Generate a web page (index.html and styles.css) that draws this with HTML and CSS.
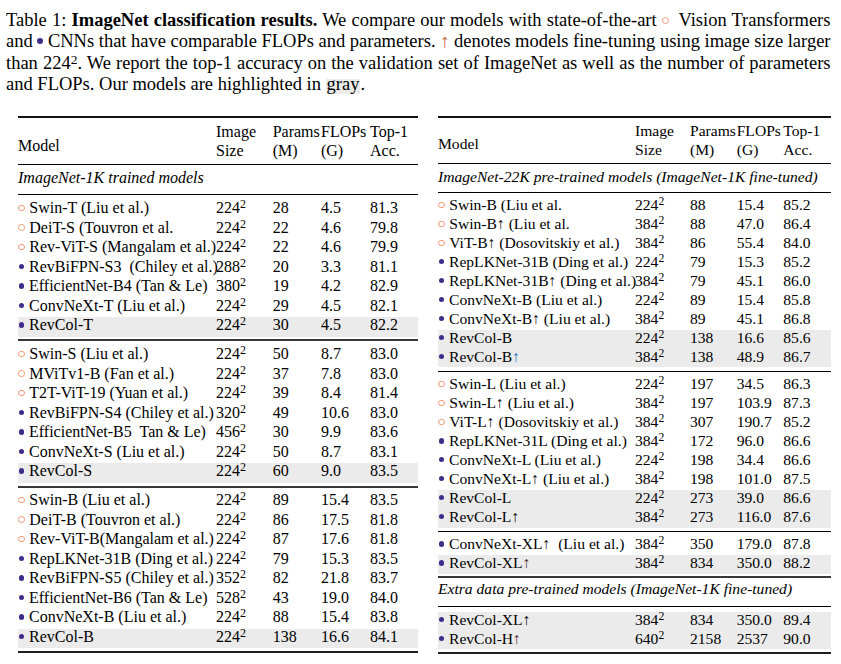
FILE: index.html
```html
<!DOCTYPE html>
<html lang="en">
<head>
<meta charset="utf-8">
<title>Table 1: ImageNet classification results</title>
<link rel="stylesheet" href="styles.css">
</head>
<body>
<div class="page">
  <div class="caption">
    <span class="ln">Table 1: <b>ImageNet classification results.</b> We compare our models with state-of-the-art <span class="mk vit"></span> Vision Transformers</span>
    <span class="ln">and <span class="mk cnn"></span> CNNs that have comparable FLOPs and parameters. <span class="up orange">↑</span> denotes models fine-tuning using image size larger</span>
    <span class="ln">than 224<sup>2</sup>. We report the top-1 accuracy on the validation set of ImageNet as well as the number of parameters</span>
    <span class="ln last">and FLOPs. Our models are highlighted in <span class="hl">gray</span>.</span>
  </div>

  <div class="tables">
    <section class="tbl tbl-left">
      <div class="rule top"></div>
      <div class="grid head"><div class="model">Model</div><div>Image<br>Size</div><div>Params<br>(M)</div><div>FLOPs<br>(G)</div><div>Top-1<br>Acc.</div></div>
      <div class="rule mid"></div>
      <div class="sect">ImageNet-1K trained models</div>
      <div class="rule"></div>

      <div class="grid row"><div><span class="mk vit"></span>Swin-T (Liu et al.)</div><div>224<sup>2</sup></div><div>28</div><div>4.5</div><div>81.3</div></div>
      <div class="grid row"><div><span class="mk vit"></span>DeiT-S (Touvron et al.</div><div>224<sup>2</sup></div><div>22</div><div>4.6</div><div>79.8</div></div>
      <div class="grid row"><div><span class="mk vit"></span>Rev-ViT-S (Mangalam et al.)</div><div>224<sup>2</sup></div><div>22</div><div>4.6</div><div>79.9</div></div>
      <div class="grid row"><div><span class="mk cnn"></span>RevBiFPN-S3&nbsp; (Chiley et al.)</div><div>288<sup>2</sup></div><div>20</div><div>3.3</div><div>81.1</div></div>
      <div class="grid row"><div><span class="mk cnn"></span>EfficientNet-B4 (Tan &amp; Le)</div><div>380<sup>2</sup></div><div>19</div><div>4.2</div><div>82.9</div></div>
      <div class="grid row"><div><span class="mk cnn"></span>ConvNeXt-T (Liu et al.)</div><div>224<sup>2</sup></div><div>29</div><div>4.5</div><div>82.1</div></div>
      <div class="grid row ours"><div><span class="mk cnn"></span>RevCol-T</div><div>224<sup>2</sup></div><div>30</div><div>4.5</div><div>82.2</div></div>
      <div class="rule thick"></div>

      <div class="grid row"><div><span class="mk vit"></span>Swin-S (Liu et al.)</div><div>224<sup>2</sup></div><div>50</div><div>8.7</div><div>83.0</div></div>
      <div class="grid row"><div><span class="mk vit"></span>MViTv1-B (Fan et al.)</div><div>224<sup>2</sup></div><div>37</div><div>7.8</div><div>83.0</div></div>
      <div class="grid row"><div><span class="mk vit"></span>T2T-ViT-19 (Yuan et al.)</div><div>224<sup>2</sup></div><div>39</div><div>8.4</div><div>81.4</div></div>
      <div class="grid row"><div><span class="mk cnn"></span>RevBiFPN-S4 (Chiley et al.)</div><div>320<sup>2</sup></div><div>49</div><div>10.6</div><div>83.0</div></div>
      <div class="grid row"><div><span class="mk cnn"></span>EfficientNet-B5&nbsp; Tan &amp; Le)</div><div>456<sup>2</sup></div><div>30</div><div>9.9</div><div>83.6</div></div>
      <div class="grid row"><div><span class="mk cnn"></span>ConvNeXt-S (Liu et al.)</div><div>224<sup>2</sup></div><div>50</div><div>8.7</div><div>83.1</div></div>
      <div class="grid row ours"><div><span class="mk cnn"></span>RevCol-S</div><div>224<sup>2</sup></div><div>60</div><div>9.0</div><div>83.5</div></div>
      <div class="rule thick"></div>

      <div class="grid row"><div><span class="mk vit"></span>Swin-B (Liu et al.)</div><div>224<sup>2</sup></div><div>89</div><div>15.4</div><div>83.5</div></div>
      <div class="grid row"><div><span class="mk vit"></span>DeiT-B (Touvron et al.)</div><div>224<sup>2</sup></div><div>86</div><div>17.5</div><div>81.8</div></div>
      <div class="grid row"><div><span class="mk vit"></span>Rev-ViT-B(Mangalam et al.)</div><div>224<sup>2</sup></div><div>87</div><div>17.6</div><div>81.8</div></div>
      <div class="grid row"><div><span class="mk cnn"></span>RepLKNet-31B (Ding et al.)</div><div>224<sup>2</sup></div><div>79</div><div>15.3</div><div>83.5</div></div>
      <div class="grid row"><div><span class="mk cnn"></span>RevBiFPN-S5 (Chiley et al.)</div><div>352<sup>2</sup></div><div>82</div><div>21.8</div><div>83.7</div></div>
      <div class="grid row"><div><span class="mk cnn"></span>EfficientNet-B6 (Tan &amp; Le)</div><div>528<sup>2</sup></div><div>43</div><div>19.0</div><div>84.0</div></div>
      <div class="grid row"><div><span class="mk cnn"></span>ConvNeXt-B (Liu et al.)</div><div>224<sup>2</sup></div><div>88</div><div>15.4</div><div>83.8</div></div>
      <div class="grid row ours"><div><span class="mk cnn"></span>RevCol-B</div><div>224<sup>2</sup></div><div>138</div><div>16.6</div><div>84.1</div></div>
      <div class="rule bottom"></div>
    </section>

    <section class="tbl tbl-right">
      <div class="rule top"></div>
      <div class="grid head"><div class="model">Model</div><div>Image<br>Size</div><div>Params<br>(M)</div><div>FLOPs<br>(G)</div><div>Top-1<br>Acc.</div></div>
      <div class="rule mid"></div>
      <div class="sect">ImageNet-22K pre-trained models (ImageNet-1K fine-tuned)</div>
      <div class="rule"></div>

      <div class="grid row"><div><span class="mk vit"></span>Swin-B (Liu et al.</div><div>224<sup>2</sup></div><div>88</div><div>15.4</div><div>85.2</div></div>
      <div class="grid row"><div><span class="mk vit"></span>Swin-B<span class="up">↑</span> (Liu et al.</div><div>384<sup>2</sup></div><div>88</div><div>47.0</div><div>86.4</div></div>
      <div class="grid row"><div><span class="mk vit"></span>ViT-B<span class="up">↑</span> (Dosovitskiy et al.)</div><div>384<sup>2</sup></div><div>86</div><div>55.4</div><div>84.0</div></div>
      <div class="grid row"><div><span class="mk cnn"></span>RepLKNet-31B (Ding et al.)</div><div>224<sup>2</sup></div><div>79</div><div>15.3</div><div>85.2</div></div>
      <div class="grid row"><div><span class="mk cnn"></span>RepLKNet-31B<span class="up">↑</span> (Ding et al.)</div><div>384<sup>2</sup></div><div>79</div><div>45.1</div><div>86.0</div></div>
      <div class="grid row"><div><span class="mk cnn"></span>ConvNeXt-B (Liu et al.)</div><div>224<sup>2</sup></div><div>89</div><div>15.4</div><div>85.8</div></div>
      <div class="grid row"><div><span class="mk cnn"></span>ConvNeXt-B<span class="up">↑</span> (Liu et al.)</div><div>384<sup>2</sup></div><div>89</div><div>45.1</div><div>86.8</div></div>
      <div class="grid row ours"><div><span class="mk cnn"></span>RevCol-B</div><div>224<sup>2</sup></div><div>138</div><div>16.6</div><div>85.6</div></div>
      <div class="grid row ours"><div><span class="mk cnn"></span>RevCol-B<span class="up blue">↑</span></div><div>384<sup>2</sup></div><div>138</div><div>48.9</div><div>86.7</div></div>
      <div class="rule"></div>

      <div class="grid row"><div><span class="mk vit"></span>Swin-L (Liu et al.)</div><div>224<sup>2</sup></div><div>197</div><div>34.5</div><div>86.3</div></div>
      <div class="grid row"><div><span class="mk vit"></span>Swin-L<span class="up">↑</span> (Liu et al.)</div><div>384<sup>2</sup></div><div>197</div><div>103.9</div><div>87.3</div></div>
      <div class="grid row"><div><span class="mk vit"></span>ViT-L<span class="up">↑</span> (Dosovitskiy et al.)</div><div>384<sup>2</sup></div><div>307</div><div>190.7</div><div>85.2</div></div>
      <div class="grid row"><div><span class="mk cnn"></span>RepLKNet-31L (Ding et al.)</div><div>384<sup>2</sup></div><div>172</div><div>96.0</div><div>86.6</div></div>
      <div class="grid row"><div><span class="mk cnn"></span>ConvNeXt-L (Liu et al.)</div><div>224<sup>2</sup></div><div>198</div><div>34.4</div><div>86.6</div></div>
      <div class="grid row"><div><span class="mk cnn"></span>ConvNeXt-L<span class="up">↑</span> (Liu et al.)</div><div>384<sup>2</sup></div><div>198</div><div>101.0</div><div>87.5</div></div>
      <div class="grid row ours"><div><span class="mk cnn"></span>RevCol-L</div><div>224<sup>2</sup></div><div>273</div><div>39.0</div><div>86.6</div></div>
      <div class="grid row ours"><div><span class="mk cnn"></span>RevCol-L<span class="up">↑</span></div><div>384<sup>2</sup></div><div>273</div><div>116.0</div><div>87.6</div></div>
      <div class="rule"></div>

      <div class="grid row"><div><span class="mk cnn"></span>ConvNeXt-XL<span class="up">↑</span>&nbsp; (Liu et al.)</div><div>384<sup>2</sup></div><div>350</div><div>179.0</div><div>87.8</div></div>
      <div class="grid row ours"><div><span class="mk cnn"></span>RevCol-XL<span class="up brown">↑</span></div><div>384<sup>2</sup></div><div>834</div><div>350.0</div><div>88.2</div></div>
      <div class="rule thick tight"></div>
      <div class="sect extra">Extra data pre-trained models (ImageNet-1K fine-tuned)</div>
      <div class="rule"></div>

      <div class="grid row ours"><div><span class="mk cnn"></span>RevCol-XL<span class="up">↑</span></div><div>384<sup>2</sup></div><div>834</div><div>350.0</div><div>89.4</div></div>
      <div class="grid row ours"><div><span class="mk cnn"></span>RevCol-H<span class="up brown">↑</span></div><div>640<sup>2</sup></div><div>2158</div><div>2537</div><div>90.0</div></div>
      <div class="rule bottom"></div>
    </section>
  </div>
</div>
</body>
</html>
```

FILE: styles.css
```css
* {
  box-sizing: border-box;
}

html,
body {
  margin: 0;
  padding: 0;
  background: #ffffff;
}

body {
  width: 841px;
  height: 664px;
  overflow: hidden;
  font-family: "Liberation Serif", "Times New Roman", serif;
  color: #000000;
}

.page {
  padding-top: 10px;
}

/* ---------- caption ---------- */
.caption {
  margin: 0 10.5px 0 6px;
  font-size: 18.5px;
  line-height: 21.3px;
}

.caption .ln {
  display: block;
  text-align: justify;
  text-align-last: justify;
  word-spacing: -1.5px;
}

.caption .ln.last {
  text-align-last: left;
  word-spacing: 0;
}

.caption b {
  font-weight: bold;
}

.caption sup {
  font-size: 13.5px;
  line-height: 0;
  vertical-align: 5.5px;
}

.caption .mk {
  width: 6px;
  height: 6px;
  margin: 0;
  vertical-align: 3px;
}

.caption .mk.vit {
  width: 7px;
  height: 7px;
  vertical-align: 2.5px;
}

.hl {
  background: linear-gradient(to bottom, transparent 5.5px, #ebebeb 5.5px);
  padding: 0 1px;
}

.up.orange {
  color: #bd5a2a;
}

.up.blue {
  color: #2f70bd;
}

.up.brown {
  color: #4a2a22;
}

/* ---------- markers ---------- */
.mk {
  display: inline-block;
  width: 5.5px;
  height: 5.5px;
  border-radius: 50%;
  vertical-align: 2.5px;
  margin: 0 5px 0 0.5px;
}

.mk.cnn {
  background: #3d2c88;
}

.mk.vit {
  width: 6.5px;
  height: 6.5px;
  vertical-align: 2px;
  margin: 0 4.5px 0 0.3px;
  border: 1px solid #f09a78;
  background: transparent;
}

/* ---------- tables ---------- */
.tables {
  display: flex;
  gap: 20px;
  margin: 20.8px 0 0 18px;
}

.tbl {
  font-size: var(--fs);
  white-space: nowrap;
}

.tbl-left {
  width: 400px;
  --fs: 16px;
  --row: 19.5px;
  --lh: 16.5px;
  --ra: 2.7px;
  --rb: 4.85px;
  --hlh: 19px;
  --hpt: 3.8px;
  --hpb: 4.7px;
  --mpt: 14.3px;
  --sx: 1.95px;
  --sup: 12px;
  --cols: 198px 56.7px 48.3px 49px 48px;
}

.tbl-right {
  width: 393px;
  --fs: 15.6px;
  --row: 18.9px;
  --lh: 15.9px;
  --ra: 3.3px;
  --rb: 4.6px;
  --hlh: 18.3px;
  --hpt: 4.3px;
  --hpb: 4.1px;
  --mpt: 12.3px;
  --sx: 0.9px;
  --sup: 11.7px;
  --cols: 197px 55px 46.7px 46.6px 47.7px;
}

.grid {
  display: grid;
  grid-template-columns: var(--cols);
}

.head {
  line-height: var(--hlh);
  padding: var(--hpt) 0 var(--hpb);
}

.head .model {
  padding-top: var(--mpt);
}

.row {
  line-height: var(--lh);
  padding-bottom: calc(var(--row) - var(--lh));
}

.row.ours {
  background: #ebebeb;
}

.row sup {
  font-size: var(--sup);
  line-height: 0;
  vertical-align: 5px;
}

.sect {
  font-style: italic;
  line-height: var(--lh);
  padding-bottom: calc(var(--row) - var(--lh) + var(--sx));
}

.sect.extra {
  --sx: 2.5px;
}

.rule {
  border-top: 1px solid #000000;
  margin: var(--ra) 0 var(--rb);
}

.rule.top {
  margin: 0;
  border-top: 2px solid #141414;
}

.rule.mid {
  margin-top: 0;
}

.rule.thick {
  border-top: 2px solid #383838;
}

.rule.thick.tight {
  margin: 2px 0 3.1px;
}

.rule.bottom {
  border-top: 2px solid #1e1e1e;
  margin-bottom: 0;
}

.tbl-right .rule.bottom {
  margin-top: 2.3px;
}
```
